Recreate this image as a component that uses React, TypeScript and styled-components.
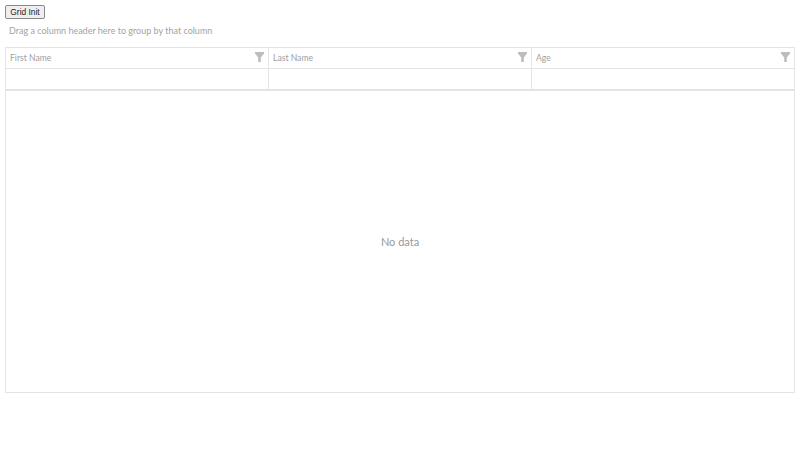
import React from 'react'
import styled, { createGlobalStyle } from 'styled-components'

const GlobalStyle = createGlobalStyle`
  html, body {
    margin: 0;
    padding: 0;
    background: #fff;
  }
`

const Page = styled.div`
  display: flex;
  flex-direction: column;
  padding: 5px;
`

const InitButton = styled.button`
  align-self: flex-start;
  box-sizing: border-box;
  height: 14px;
  width: 40px;
  padding: 0;
  font: 8.4px/1 'Liberation Sans', Arial, sans-serif;
  color: #222;
  background: #efefef;
  border: 1px solid #8a8a8a;
  border-radius: 2px;
`

const GroupPanel = styled.div`
  box-sizing: border-box;
  display: flex;
  align-items: center;
  height: 28px;
  padding: 0 0 5px 4px;
  font: 9px/16px Lato, sans-serif;
  color: #a3a3a3;
`

const Grid = styled.div`
  box-sizing: border-box;
  height: 346px;
  border: 1px solid #e4e4e4;
  display: flex;
  flex-direction: column;
`

const Row = styled.div<{ $filter?: boolean }>`
  box-sizing: border-box;
  display: grid;
  grid-template-columns: 263px 263px 1fr;
  flex: none;
  height: ${(p) => (p.$filter ? '22px' : '21px')};
  border-bottom: ${(p) => (p.$filter ? '2px' : '1px')} solid #e4e4e4;
`

const HeaderCell = styled.div`
  display: flex;
  align-items: center;
  justify-content: space-between;
  padding: 1px 4px 0;
  font: 8.6px/1 Lato, sans-serif;
  color: #a0a0a0;
  border-right: 1px solid #e4e4e4;

  &:last-child {
    border-right: 0;
  }
`

const FilterCell = styled.div`
  border-right: 1px solid #e4e4e4;

  &:last-child {
    border-right: 0;
  }
`

const FilterIcon = styled.svg`
  width: 9px;
  height: 10px;
  fill: #bdbdbd;
  flex: none;
  margin-top: -3px;
`

const Empty = styled.div`
  flex: 1;
  display: flex;
  align-items: center;
  justify-content: center;
  padding-bottom: 1px;
  font: 11px/1 Lato, sans-serif;
  color: #999;
`

const columns = ['First Name', 'Last Name', 'Age']

export default function App() {
  return (
    <>
      <GlobalStyle />
      <Page>
        <InitButton>Grid Init</InitButton>
        <GroupPanel>Drag a column header here to group by that column</GroupPanel>
        <Grid>
          <Row>
            {columns.map((name) => (
              <HeaderCell key={name}>
                {name}
                <FilterIcon viewBox="0 0 9 10">
                  <path d="M0 0h9v1.6L5.8 5.4V10H3.2V5.4L0 1.6z" />
                </FilterIcon>
              </HeaderCell>
            ))}
          </Row>
          <Row $filter>
            {columns.map((name) => (
              <FilterCell key={name} />
            ))}
          </Row>
          <Empty>No data</Empty>
        </Grid>
      </Page>
    </>
  )
}
